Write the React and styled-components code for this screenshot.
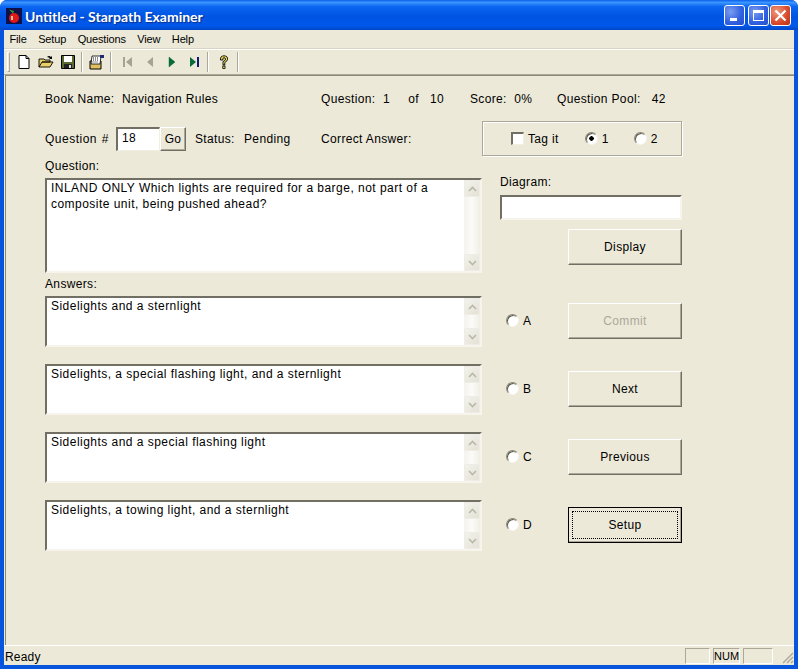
import styled, { createGlobalStyle } from 'styled-components';

const Global = createGlobalStyle`
  html, body {
    margin: 0;
    padding: 0;
    background: #fff;
  }
  body {
    font-family: "Liberation Sans", Arial, sans-serif;
    font-size: 12px;
    color: #000;
  }
`;

const Win = styled.div`
  width: 798px;
  height: 669px;
  display: flex;
  flex-direction: column;
  box-sizing: border-box;
  border-radius: 7px 7px 0 0;
  overflow: hidden;
  background: #0855dd;
`;

const TitleBar = styled.div`
  height: 30px;
  flex: none;
  display: flex;
  align-items: center;
  box-sizing: border-box;
  padding: 2px 7px 0 6px;
  background: linear-gradient(180deg, #0a5fe8 0%, #3d95ff 8%, #0a66f0 22%, #0054e3 55%, #0058ea 85%, #0047c8 100%);
`;

const AppIcon = styled.svg`
  width: 16px;
  height: 16px;
  margin-right: 3px;
  flex: none;
`;

const Title = styled.div`
  flex: 1;
  color: #fff;
  font-family: Lato, "Open Sans", sans-serif;
  font-weight: 700;
  font-size: 14px;
  text-shadow: 1px 1px 1px #0a2f8c;
`;

const CapBtn = styled.div`
  width: 21px;
  height: 21px;
  margin: 0 0 1px ${p => (p.$close ? 1 : 3)}px;
  box-sizing: border-box;
  border: 1px solid #fff;
  border-radius: 3px;
  display: flex;
  align-items: center;
  justify-content: center;
  background: ${p => (p.$close
    ? 'radial-gradient(circle at 30% 30%, #ee9a80, #d9492a 60%, #b8321a)'
    : 'radial-gradient(circle at 30% 30%, #7a9cf0, #2f5fe0 60%, #2a4fc8)')};
`;

const Frame = styled.div`
  flex: 1;
  display: flex;
  flex-direction: column;
  margin: 0 4px 4px;
  background: #ece9d8;
  min-height: 0;
`;

const MenuBar = styled.div`
  height: 19px;
  flex: none;
  display: flex;
  align-items: center;
  box-sizing: border-box;
  border-bottom: 1px solid #d8d5c4;
  font-size: 11px;
`;

const MenuItem = styled.span`
  padding: 0 6px 0 5.5px;
  letter-spacing: -0.15px;
`;

const Toolbar = styled.div`
  height: 26px;
  flex: none;
  display: flex;
  align-items: center;
  padding: 0 0 1px 3px;
  border-top: 1px solid #fff;
  border-bottom: 1px solid #aca899;
  box-sizing: border-box;
`;

const Grip = styled.div`
  width: 3px;
  height: 20px;
  margin-right: 3px;
  border-left: 1px solid #fff;
  border-top: 1px solid #fff;
  border-right: 1px solid #aca899;
  border-bottom: 1px solid #aca899;
  box-sizing: border-box;
`;

const Sep = styled.div`
  width: 2px;
  height: 20px;
  margin: 0 ${p => p.$after || 3}px 0 2px;
  border-left: 1px solid #aca899;
  border-right: 1px solid #fff;
  box-sizing: border-box;
`;

const Tool = styled.svg`
  width: 16px;
  height: 16px;
  padding: 0 3px;
  flex: none;
`;

const Main = styled.main`
  flex: 1;
  min-height: 0;
  margin-left: 1px;
  padding: 16px 0 0 39px;
  border-top: 1px solid #8a8877;
  border-left: 1px solid #8a8877;
  box-sizing: border-box;
  position: relative;
`;

const InfoRow = styled.div`
  height: 14px;
  line-height: 14px;
  display: flex;
  margin-bottom: 21px;
`;

const Cell = styled.span`
  width: ${p => p.$w}px;
  flex: none;
  white-space: pre;
  letter-spacing: 0.35px;
`;

const Body = styled.div`
  display: flex;
`;

const Left = styled.div`
  width: 437px;
  flex: none;
`;

const Right = styled.div`
  flex: none;
  width: 182px;
  margin-left: 18px;
`;

const QRow = styled.div`
  display: flex;
  align-items: center;
  height: 24px;
  margin-top: 6px;
`;

const Label = styled.div`
  height: 14px;
  line-height: 14px;
  letter-spacing: 0.35px;
  margin: ${p => p.$m || '0'};
`;

const QuestionNo = styled.span`
  width: 71px;
  flex: none;
  letter-spacing: 0.5px;
  word-spacing: 1px;
`;

const SmallInput = styled.div`
  width: 44px;
  height: 24px;
  box-sizing: border-box;
  background: #fff;
  border-top: 2px solid #716f64;
  border-left: 2px solid #716f64;
  border-bottom: 1px solid #f1efe2;
  border-right: 1px solid #f1efe2;
  padding: 2px 0 0 4px;
  line-height: 15px;
  letter-spacing: 0.35px;
`;

const Box = styled.div`
  width: ${p => p.$w || '100%'};
  height: ${p => p.$h}px;
  box-sizing: border-box;
  background: #fff;
  border-top: 2px solid #716f64;
  border-left: 2px solid #716f64;
  border-bottom: 2px solid #f6f4ec;
  border-right: 2px solid #f6f4ec;
  display: flex;
`;

const BoxText = styled.div`
  flex: 1;
  padding: 0 4px;
  line-height: 16px;
  letter-spacing: 0.47px;
`;

const Scroll = styled.div`
  width: 16px;
  flex: none;
  display: flex;
  flex-direction: column;
  justify-content: space-between;
  background: linear-gradient(90deg, #f4f3ee, #fbfbf8 50%, #f0efe6);
`;

const ScrollBtn = styled.div`
  height: 17px;
  box-sizing: border-box;
  border: 1px solid #eeede5;
  border-radius: 2px;
  background: linear-gradient(135deg, #f3f2ec, #e4e2d6);
  display: flex;
  align-items: center;
  justify-content: center;
`;

const Answer = styled.div`
  display: flex;
  align-items: center;
  margin-bottom: 17px;
  width: 637px;
`;

const AnswerBox = styled(Box)`
  width: 437px;
  flex: none;
`;

const Radio = styled.span`
  width: 13px;
  height: 13px;
  flex: none;
  box-sizing: border-box;
  border-radius: 50%;
  margin-left: ${p => p.$ml || 0}px;
  background: ${p => (p.$on ? 'radial-gradient(circle, #000 0 2px, #fff 2.5px)' : '#fff')};
  border: 1px solid;
  border-color: #8a8877 #f5f4ee #f5f4ee #8a8877;
  box-shadow: inset 1px 1px 0 #5c5b50;
`;

const RadioCol = styled.div`
  width: 62px;
  margin: 0 0 2px 24px;
  flex: none;
  display: flex;
  align-items: center;
`;

const RadioText = styled.span`
  margin-left: 4px;
  letter-spacing: 0.35px;
  font-size: 12px;
`;

const Button = styled.div`
  width: 114px;
  height: 36px;
  flex: none;
  box-sizing: border-box;
  display: flex;
  align-items: center;
  justify-content: center;
  background: #ece9d8;
  letter-spacing: 0.35px;
  color: ${p => (p.$disabled ? '#aca899' : '#000')};
  border-top: 1px solid #fff;
  border-left: 1px solid #fff;
  border-right: 1px solid #716f64;
  border-bottom: 1px solid #716f64;
  box-shadow: inset -1px -1px 0 #aca899;
`;

const AnswerButton = styled(Button)`
  margin-bottom: 1px;
`;

const DisplayButton = styled(Button)`
  margin: 9px 0 0 68px;
`;

const DefaultButton = styled(AnswerButton)`
  border: 1.5px solid #000;
  outline: 1px dotted #000;
  outline-offset: -5px;
  box-shadow: inset -1px -1px 0 #aca899;
`;

const GoButton = styled.div`
  width: 26px;
  height: 24px;
  box-sizing: border-box;
  margin-right: 9px;
  display: flex;
  align-items: center;
  justify-content: center;
  border-top: 1px solid #fff;
  border-left: 1px solid #fff;
  border-right: 1px solid #716f64;
  border-bottom: 1px solid #716f64;
  box-shadow: inset -1px -1px 0 #aca899;
  letter-spacing: 0.35px;
`;

const GroupBox = styled.div`
  position: absolute;
  left: 476px;
  top: 45px;
  width: 200px;
  height: 35px;
  box-sizing: border-box;
  border: 1px solid #aca899;
  box-shadow: inset 1px 1px 0 #fff, 1px 1px 0 #fff;
  display: flex;
  align-items: center;
  padding-left: 28px;
`;

const Check = styled.span`
  width: 13px;
  height: 13px;
  box-sizing: border-box;
  background: #fff;
  border-top: 2px solid #716f64;
  border-left: 2px solid #716f64;
  border-right: 1px solid #f1efe2;
  border-bottom: 1px solid #f1efe2;
`;

const StatusBar = styled.footer`
  height: 20px;
  flex: none;
  display: flex;
  align-items: center;
  box-sizing: border-box;
  border-top: 1px solid #fff;
  padding: 0 0 0 1px;
`;

const StatusText = styled.span`
  flex: 1;
  padding-top: 2px;
  letter-spacing: 0.2px;
`;

const Pane = styled.div`
  width: ${p => p.$w}px;
  height: 16px;
  margin: 1px 3px 0 0;
  box-sizing: border-box;
  border: 1px solid;
  border-color: #aca899 #fff #fff #aca899;
  font-size: 11px;
  line-height: 15px;
  text-align: center;
`;

const Resize = styled.svg`
  width: 14px;
  height: 14px;
  margin: 3px 0 0 4px;
  flex: none;
`;

const UpArrow = () => (
  <svg width="9" height="6" viewBox="0 0 9 6"><path d="M1 5 L4.5 1.5 L8 5" fill="none" stroke="#b9b8a8" strokeWidth="1.6" /></svg>
);
const DownArrow = () => (
  <svg width="9" height="6" viewBox="0 0 9 6"><path d="M1 1 L4.5 4.5 L8 1" fill="none" stroke="#b9b8a8" strokeWidth="1.6" /></svg>
);

const Bar = () => (
  <Scroll>
    <ScrollBtn><UpArrow /></ScrollBtn>
    <ScrollBtn><DownArrow /></ScrollBtn>
  </Scroll>
);

const answers = [
  { letter: 'A', text: 'Sidelights and a sternlight', button: 'Commit', disabled: true },
  { letter: 'B', text: 'Sidelights, a special flashing light, and a sternlight', button: 'Next' },
  { letter: 'C', text: 'Sidelights and a special flashing light', button: 'Previous' },
  { letter: 'D', text: 'Sidelights, a towing light, and a sternlight', button: 'Setup', isDefault: true },
];

const App = () => {
  return (
    <Win>
      <Global />
      <TitleBar>
        <AppIcon viewBox="0 0 16 16">
          <rect width="16" height="16" fill="#101048" />
          <circle cx="8" cy="10" r="5" fill="#e01818" />
          <path d="M7 5.5 L3 1.5 L8 3z" fill="#30a030" />
          <path d="M5 8 h2 v4 h-2z" fill="#f0c0a0" />
        </AppIcon>
        <Title>Untitled - Starpath Examiner</Title>
        <CapBtn>
          <svg width="13" height="13" viewBox="0 0 13 13"><rect x="2" y="9" width="7" height="3" fill="#fff" /></svg>
        </CapBtn>
        <CapBtn>
          <svg width="15" height="15" viewBox="0 0 15 15"><path d="M2 2h11v11H2z M3 5v7h9V5z" fill="#fff" fillRule="evenodd" /></svg>
        </CapBtn>
        <CapBtn $close>
          <svg width="15" height="15" viewBox="0 0 15 15"><path d="M2.5 2.5 L12.5 12.5 M12.5 2.5 L2.5 12.5" stroke="#fff" strokeWidth="2.2" /></svg>
        </CapBtn>
      </TitleBar>
      <Frame>
        <MenuBar>
          {['File', 'Setup', 'Questions', 'View', 'Help'].map(m => <MenuItem key={m}>{m}</MenuItem>)}
        </MenuBar>
        <Toolbar>
          <Grip />
          <Tool viewBox="0 0 16 16"><path d="M3 1.5h7l3 3v10H3z" fill="#fff" stroke="#000" /><path d="M10 1.5v3h3" fill="none" stroke="#000" /></Tool>
          <Tool viewBox="0 0 16 16"><path d="M1 13V5h5l1 1h5v2H4L1 13h11l3-5H4" fill="#e8d068" stroke="#000" strokeWidth="0.9" /><path d="M9 3 Q11 1 13 3 l1-1 v3 h-3 l1-1" fill="#000" /></Tool>
          <Tool viewBox="0 0 16 16"><path d="M1.5 1.5h13v13h-13z" fill="#5a6a30" stroke="#000" /><rect x="4" y="2" width="8" height="6" fill="#fff" /><rect x="4" y="10" width="8" height="4" fill="#222" /><rect x="9" y="11" width="2" height="3" fill="#ddd" /></Tool>
          <Sep />
          <Tool viewBox="0 0 16 16"><path d="M1 7h11v8H1z" fill="#e0c060" stroke="#000" /><path d="M3 2l9 0-1 8H2z" fill="#fff" stroke="#000" strokeWidth="0.8" /><path d="M4 4h6M4 6h6M3.5 8h6" stroke="#000" strokeWidth="0.9" strokeDasharray="1 1" /><rect x="11" y="1" width="4" height="3" fill="#202878" /></Tool>
          <Sep $after={5} />
          <Tool viewBox="0 0 16 16"><rect x="3" y="3" width="2" height="10" fill="#a5a392" /><path d="M12 3v10L6 8z" fill="#a5a392" /></Tool>
          <Tool viewBox="0 0 16 16"><path d="M11 3v10L5 8z" fill="#a5a392" /></Tool>
          <Tool viewBox="0 0 16 16"><path d="M5 3v10l6-5z" fill="#0a6a3c" stroke="#063" strokeWidth="0.4" /></Tool>
          <Tool viewBox="0 0 16 16"><path d="M4 3v10l6-5z" fill="#0a6a3c" /><rect x="11" y="3" width="2" height="10" fill="#101870" /></Tool>
          <Sep $after={4} />
          <Tool viewBox="0 0 16 16"><path d="M4.5 6 Q4 2 8 1.8 Q12 2 11.5 5.5 Q11 7.5 8.8 8.5 V11 H7 V7.5 Q9.5 6.8 9.5 5 Q9.3 3.7 8 3.7 Q6.6 3.8 6.8 6z" fill="#f0e050" stroke="#000" strokeWidth="0.9" /><rect x="6.8" y="12" width="2.2" height="2.5" fill="#f0e050" stroke="#000" strokeWidth="0.8" /></Tool>
          <Sep />
        </Toolbar>
        <Main>
          <InfoRow>
            <Cell $w={276}>Book Name:  Navigation Rules</Cell>
            <Cell $w={149}>Question:  1     of   10</Cell>
            <Cell $w={87}>Score:  0%</Cell>
            <Cell $w={120}>Question Pool:   42</Cell>
          </InfoRow>
          <QRow>
            <QuestionNo>Question #</QuestionNo>
            <SmallInput>18</SmallInput>
            <GoButton>Go</GoButton>
            <Cell $w={49}>Status:</Cell>
            <Cell $w={77}>Pending</Cell>
            <Cell $w={120}>Correct Answer:</Cell>
          </QRow>
          <GroupBox>
            <Check />
            <RadioText>Tag it</RadioText>
            <Radio $on $ml={26} />
            <RadioText>1</RadioText>
            <Radio $ml={25} />
            <RadioText>2</RadioText>
          </GroupBox>
          <Body>
            <Left>
              <Label $m="8px 0 5px">Question:</Label>
              <Box $h={95}>
                <BoxText>INLAND ONLY Which lights are required for a barge, not part of a composite unit, being pushed ahead?</BoxText>
                <Bar />
              </Box>
            </Left>
            <Right>
              <Label $m="24px 0 6px">Diagram:</Label>
              <Box $h={25} />
              <DisplayButton>Display</DisplayButton>
            </Right>
          </Body>
          <Label $m="4px 0 5px">Answers:</Label>
          {answers.map(a => {
            const Btn = a.isDefault ? DefaultButton : AnswerButton;
            return (
              <Answer key={a.letter}>
                <AnswerBox $h={51}>
                  <BoxText>{a.text}</BoxText>
                  <Bar />
                </AnswerBox>
                <RadioCol>
                  <Radio />
                  <RadioText>{a.letter}</RadioText>
                </RadioCol>
                <Btn $disabled={a.disabled}>{a.button}</Btn>
              </Answer>
            );
          })}
        </Main>
        <StatusBar>
          <StatusText>Ready</StatusText>
          <Pane $w={25} />
          <Pane $w={27}>NUM</Pane>
          <Pane $w={30} />
          <Resize viewBox="0 0 14 14"><path d="M13 3L3 13M13 7L7 13M13 11L11 13" stroke="#aca899" strokeWidth="1.4" /></Resize>
        </StatusBar>
      </Frame>
    </Win>
  );
};

export default App;
